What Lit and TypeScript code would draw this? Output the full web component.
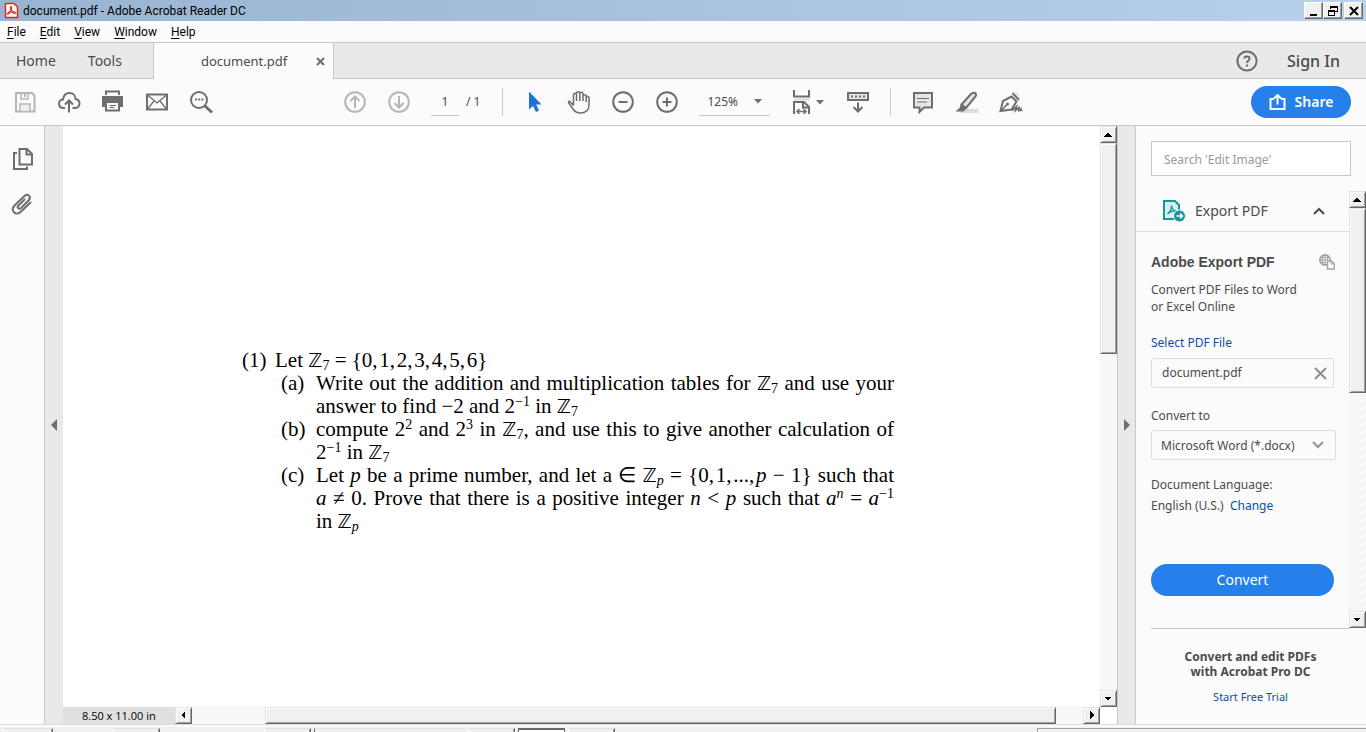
import { LitElement, html, css, svg } from "lit";
import { customElement, property } from "lit/decorators.js";
import { styleMap } from "lit/directives/style-map.js";

const icon = (body: unknown, size = 24) =>
  html`<svg class="icon" width=${size} height=${size} viewBox="0 0 ${size} ${size}" fill="none" stroke="currentColor" stroke-width="2" aria-hidden="true">${body}</svg>`;

const icons = {
  save: svg`<path d="M3 3H19L21.500 5.500V21.500H3Z"/><path d="M8 3V9H15V3" stroke-width="1.500"/><path d="M12 4V7"/><path d="M7 21V14H17V21" fill="#ececec" stroke-width="1.500"/>`,
  cloud: svg`<path d="M8 18H6.500C3.500 18 2 16 2 13.500S4 9.500 6 9.500C6.500 6 8.500 3 12.500 3S18.500 6 18.500 9C21 9.500 22.500 11 22.500 13.500S20.500 18 18 18H15.500"/><path d="M12 22.500V11M8 14.500L12 10.500L16 14.500"/>`,
  print: svg`<path d="M5 5V1.500H18V5" stroke-width="2"/><path d="M1 6H22V17H18V13H5V17H1Z" fill="currentColor" stroke="none"/><path d="M5 13V20.500H18V13"/><path d="M8.500 15.500H15M8.500 17.500H13" stroke-width="1"/>`,
  mail: svg`<path d="M2 4.500H22V19.500H2Z"/><path d="M2.500 5L12 13L21.500 5M2.500 19L9 11M21.500 19L15 11" stroke-width="1.300"/>`,
  find: svg`<circle cx="10" cy="10" r="8"/><path d="M15.500 15.500L23 22.500" stroke-width="3"/><path d="M6 9.500H8M9.200 9.500H11.200M12.400 9.500H14.400"/>`,
  up: svg`<circle cx="12" cy="12" r="9.800"/><path d="M12 18V7M7.500 11L12 6.500L16.500 11"/>`,
  down: svg`<circle cx="12" cy="12" r="9.800"/><path d="M12 6V17M7.500 13L12 17.500L16.500 13"/>`,
  pointer: svg`<path d="M6 1.500V19.500L10 16L13 22L16 20.500L13.200 14.500H18.500Z" fill="#2074d0" stroke="none"/>`,
  hand: svg`<path d="M6.500 15.500L3.500 12C2 10 1 12 1.800 13L6 19C8 22 10 23 13.500 23C18.500 23 22 20 22 15V8C22 5.500 19.200 5.500 19.200 8M6.500 15.500V5C6.500 2.500 9.500 2.500 9.500 5V11M9.500 6V3.500C9.500 1 12.800 1 12.800 3.500V11M12.800 5V4C12.800 1.500 16 1.500 16 4V11M16 6.500C16 4 19.200 4 19.200 6.500V12" stroke-width="1.500"/>`,
  minus: svg`<circle cx="12" cy="12" r="9.800"/><path d="M7.500 12H16.500"/>`,
  plus: svg`<circle cx="12" cy="12" r="9.800"/><path d="M7.500 12H16.500M12 7.500V16.500"/>`,
  fit: svg`<path d="M4 0V6.500H19V0M4 24V12H14L19 17V24M13 12V17.500H19"/><path d="M4 9.500H20" stroke="#dcdcdc"/><path d="M7 21.500H16M9.500 19L7 21.500L9.500 24M13.500 19L16 21.500L13.500 24" stroke-width="1.500"/>`,
  keyboard: svg`<path d="M2 3H22V10H2Z" fill="#e6e6e6"/><path d="M5 6.500H19.500" stroke-dasharray="2 2"/><path d="M12 12.500V21M7.500 17L12 21.500L16.500 17"/>`,
  comment: svg`<path d="M3 3H21V17.500H13L8.500 22V17.500H3Z" fill="#e6e6e6"/><path d="M6 8.500H18M6 12H16" stroke-width="1"/>`,
  marker: svg`<path d="M8 19H23V23H4Z" fill="#dcdcdc" stroke="none"/><path d="M6.500 14.500L16 4C18.500 1.500 22.500 3 20.500 6.500L11 18Z" fill="#e6e6e6"/><path d="M6 14L11.500 18.500L8.500 21.500H0.500L4.500 18Z" fill="currentColor" stroke="none"/>`,
  sign: svg`<path d="M13.500 3L20 10" stroke-width="2"/><path d="M14 2.500L18 3L21.500 8.500Z" fill="#dcdcdc" stroke="none"/><path d="M1.500 21L4 11L12.500 6.500L17.500 11.500L12.500 19.500Z"/><path d="M2 21L8 14.500" stroke-width="1.500"/><circle cx="8.500" cy="14" r="1.500" fill="currentColor" stroke="none"/><path d="M13 20.500L17.500 16.500L16.500 20.500L20 17.500V20.500L22 19V20.500H23.500" stroke-width="1.700"/>`,
  help: svg`<circle cx="12" cy="12" r="9.600"/><path d="M9.300 9.500C9.300 6.800 14.600 6.800 14.600 9.500C14.600 11.500 12 11.500 12 14M12 15.500V17.500" stroke-width="2"/>`,
  share: svg`<path d="M5 5H1.500V15H15.500V5H12" stroke-width="2"/><path d="M8.500 10.500V2M5 4.500L8.500 1L12 4.500" stroke-width="2"/>`,
  pages: svg`<path d="M9.500 2H17L22 7V17.500H9.500Z"/><path d="M16.500 2V7.500H22"/><path d="M7 6H4V22H17V19.500"/>`,
  clip: svg`<path d="M15 7L8.500 13.500C6.500 15.500 9 18 11 16L18.500 8.500C22 5 18 1 14.500 4L4.500 13.500C-0.500 18.500 6 24.500 10.500 20L21 10" stroke-width="2"/>`,
  exportPdf: svg`<path d="M2 2H13L17 6V20H2Z" fill="#d7eeec" stroke="#15959a"/><path d="M5.500 15C8 13 9.500 10 9.500 6.500C10 9.500 11.500 12 14.500 12C11 11.500 8 12.500 5.500 15Z" stroke="#15959a" stroke-width="1.300"/><circle cx="17.500" cy="17" r="6" fill="#15959a" stroke="#fbfbfb" stroke-width="1"/><path d="M14.500 17H20M18 14.500L20.500 17L18 19.500" stroke="#fff" stroke-width="1.500"/>`,
  globe: svg`<circle cx="6" cy="6" r="5"/><path d="M1 6H8M6 1V10M2.500 3.500H9.500M2 8.500H7M3.500 2V10M8.500 2V6" stroke-width="1"/><path d="M8.500 7H12.500L15.500 10V15H8.500Z" fill="#fbfbfb" stroke-width="1.500"/><path d="M12 7V10H15" stroke-width="1"/>`,
};

@customElement("classic-scrollbar")
export class ClassicScrollbar extends LitElement {
  @property() axis = "vertical";
  @property({ type: Number }) before = 0;
  @property({ type: Number }) thumb = 1;
  @property({ type: Number }) after = 1;

  static styles = css`
    :host { display: flex; box-sizing: border-box; }
    .bar { display: flex; flex: 1; background: repeating-conic-gradient(#f0f0f0 0 25%, #fff 0 50%) 0 0 / 2px 2px; }
    .bar.vertical { flex-direction: column; width: 17px; }
    .bar.horizontal { height: 17px; }
    .track { display: flex; flex: 1; min-width: 0; min-height: 0; }
    .vertical .track { flex-direction: column; }
    .arrow, .thumb {
      box-sizing: border-box; background: #f0f0f0; padding: 0;
      border: 1px solid; border-color: #e3e3e3 #696969 #696969 #e3e3e3;
      box-shadow: inset 1px 1px #fff, inset -1px -1px #a0a0a0;
    }
    .arrow { flex: none; width: 17px; height: 17px; display: grid; place-items: center; }
    .tri { display: block; fill: #000; }
  `;

  render() {
    const vertical = this.axis === "vertical";
    const arrow = (label: string, d: string) => html`
      <button class="arrow" aria-label=${label}>
        <svg class="tri" width="9" height="9" viewBox="0 0 9 9" shape-rendering="crispEdges"><path d=${d} /></svg>
      </button>`;
    return html`
      <div class="bar ${this.axis}">
        ${vertical ? arrow("Scroll up", "M0 6.500L4 2.500L8 6.500Z") : arrow("Scroll left", "M6 0L2 4L6 8Z")}
        <div class="track">
          <div style=${styleMap({ flexGrow: String(this.before) })}></div>
          <div class="thumb" style=${styleMap({ flexGrow: String(this.thumb) })}></div>
          <div style=${styleMap({ flexGrow: String(this.after) })}></div>
        </div>
        ${vertical ? arrow("Scroll down", "M0 2.500L4 6.500L8 2.500Z") : arrow("Scroll right", "M3 0L7 4L3 8Z")}
      </div>`;
  }
}

@customElement("app-root")
export class AppRoot extends LitElement {
  static styles = css`
    :host {
      display: flex; flex-direction: column; height: 100vh; overflow: hidden;
      font: 12px/16px "Noto Sans", "Open Sans", sans-serif; color: #4b4b4b; background: #fbfbfb;
    }
    * { box-sizing: border-box; }
    button, input, select { font: inherit; color: inherit; border: 0; padding: 0; margin: 0; background: none; border-radius: 0; outline: none; }
    select { appearance: none; }
    a { color: #0a51a1; text-decoration: none; }
    .icon { display: block; flex: none; }
    h1, h2, p, ol { margin: 0; padding: 0; font-size: inherit; font-weight: inherit; }

    .title { display: flex; align-items: center; height: 21px; flex: none; padding: 0 3px 0 4px; background: linear-gradient(90deg, #99b4d1, #b9d1ea); color: #000; }
    .title-text { flex: 1; padding-left: 4px; font: 12px/20px Roboto, "Open Sans", sans-serif; }
    .win { width: 19px; height: 17px; background: #f0f0f0; border: 1px solid; border-color: #fff #696969 #696969 #fff; box-shadow: inset -1px -1px #a0a0a0; display: grid; place-items: center; }
    .win.close { margin-left: 2px; }

    .menu { display: flex; gap: 14px; height: 21px; flex: none; padding: 1px 7px 0; color: #000; font: 12px/20px Roboto, "Open Sans", sans-serif; }
    .key { text-decoration: underline; text-underline-offset: 2px; }

    .tabs { display: flex; height: 37px; flex: none; border: solid #c8c8c8; border-width: 1px 0; background: #e9e9e9; font-size: 14px; }
    .nav { padding: 0 16px; }
    .nav.last { padding-right: 31px; }
    .tab { display: flex; align-items: center; justify-content: space-between; width: 181px; height: 36px; padding: 0 8px 0 47px; background: #fbfbfb; border: solid #c8c8c8; border-width: 0 1px; font-size: 13px; }
    .tab-x { display: grid; }
    .account { display: flex; align-items: center; gap: 28px; margin-left: auto; padding-right: 26px; color: #6e6e6e; }
    .sign { font-size: 16px; line-height: 20px; font-weight: 500; color: #4b4b4b; }

    .tools { display: flex; align-items: center; height: 47px; flex: none; border-bottom: 1px solid #c8c8c8; padding: 0 15px 0 3px; color: #6e6e6e; }
    .tool { display: flex; align-items: center; justify-content: center; width: 44px; height: 44px; flex: none; }
    .tool.off { color: #b6b6b6; }
    .group { display: flex; align-items: center; }
    .group.paging { margin-left: 110px; }
    .rule { width: 1px; height: 28px; background: #cbcbcb; flex: none; }
    .rule.one { margin: 0 10px 0 22px; }
    .rule.two { margin: 0 10px; }
    .page-no { width: 28px; height: 28px; margin-left: 10px; border-bottom: 1px solid #c8c8c8; text-align: center; color: #4b4b4b; }
    .pages { padding-left: 7px; color: #4b4b4b; }
    .zoom { display: flex; align-items: center; width: 71px; height: 28px; margin: 0 10px; border-bottom: 1px solid #c8c8c8; }
    .zoom-select { width: 55px; height: 26px; padding-left: 8px; color: #4b4b4b; }
    .tool.fit { width: 48px; gap: 2px; padding-left: 6px; }
    .tool.scroll { width: 52px; padding-left: 8px; }
    .share { display: flex; align-items: center; justify-content: center; gap: 9px; width: 100px; height: 32px; margin-left: auto; border-radius: 16px; background: #2680eb; color: #fff; font-size: 14px; font-weight: 600; }

    .main { display: flex; flex: 1; min-height: 0; }
    .side { display: flex; flex-direction: column; align-items: center; gap: 21px; width: 45px; flex: none; padding-top: 21px; border-right: 1px solid #c8c8c8; color: #6e6e6e; }
    .fold { display: grid; place-items: center; width: 18px; flex: none; background: #e9e9e9; }
    .fold.right { border: solid #c8c8c8; border-width: 0 1px; width: 19px; }
    .view { display: grid; grid-template: minmax(0, 1fr) 17px / minmax(0, 1fr) 17px; flex: 1; min-width: 0; background: #fff; }
    .paper { padding: 223px 0 0 179px; overflow: hidden; color: #000; font: 21px/23px "Liberation Serif", serif; white-space: nowrap; }
    .foot { display: flex; min-width: 0; }
    .size { width: 112px; flex: none; padding-left: 19px; background: #e0e0e0; color: #000; font: 11px/17px "Open Sans", sans-serif; }
    .grow { flex: 1; }

    .question { display: grid; grid-template-columns: 33px max-content; }
    .parts { display: grid; grid-template-columns: 35px 578px; padding-left: 39px; }
    .line { display: block; }
    .full { text-align-last: justify; }
    sub, sup { font-size: 14px; line-height: 0; }
    sub { vertical-align: -3px; }
    sup { vertical-align: 7px; }
    .z { font-family: "DejaVu Sans", sans-serif; font-size: 19px; line-height: 0; }

    .panel { display: flex; flex-direction: column; width: 230px; flex: none; }
    .search { width: 200px; height: 35px; margin: 15px 0 15px 15px; padding: 2px 12px 0; border: 1px solid #c8c8c8; background: #fff; font-size: 12px; }
    .search::placeholder { color: #9a9a9a; opacity: 1; }
    .scroller { display: flex; height: 437px; flex: none; }
    .body { flex: 1; min-width: 0; }
    .head { display: flex; align-items: center; width: 100%; height: 41px; padding: 0 24px 0 26px; border-bottom: 1px solid #dcdcdc; font-size: 14px; }
    .head-text { flex: 1; padding-left: 9px; text-align: left; }
    .content { display: flex; flex-direction: column; padding: 21px 14px 0 15px; }
    .name { display: flex; justify-content: space-between; align-items: center; font: bold 14px/18px "Liberation Sans", sans-serif; color: #4b4b4b; }
    .name .icon { color: #a5a5a5; }
    .desc { margin-top: 10px; line-height: 17px; }
    .pick { margin-top: 20px; }
    .file { display: flex; align-items: center; justify-content: space-between; width: 183px; height: 30px; margin-top: 7px; padding: 0 6px 0 10px; border: 1px solid #dcdcdc; border-radius: 3px; }
    .label { margin-top: 20px; }
    .format { display: grid; width: 185px; height: 30px; margin-top: 6px; border: 1px solid #dcdcdc; border-radius: 3px; align-items: center; }
    .format-select { grid-area: 1 / 1; height: 28px; padding: 2px 0 0 9px; }
    .format .icon { grid-area: 1 / 1; justify-self: end; margin-right: 11px; color: #959595; pointer-events: none; }
    .lang { margin-top: 14px; line-height: 21px; }
    .convert { width: 183px; height: 32px; margin-top: 48px; border-radius: 16px; background: #2680eb; color: #fff; font-size: 14px; }
    .promo { margin-left: 15px; width: 199px; padding-top: 20px; border-top: 1px solid #c8c8c8; text-align: center; }
    .promo-title { font-weight: 700; font-size: 12px; line-height: 15px; }
    .trial { display: block; margin-top: 10px; font-size: 11px; }

    .taskbar { display: flex; gap: 3px; height: 8px; flex: none; padding: 3px 0 0 3px; border-top: 1px solid #dcdcdc; background: #f0f0f0; overflow: hidden; box-shadow: inset 0 2px #f8fbff; }
    .task { width: 47px; flex: none; border: solid; border-width: 1px 1px 0 1px; border-color: #e3e3e3 #696969 #696969 #fff; box-shadow: inset -1px 0 #a0a0a0; }
    .task.first { width: 50px; }
    .task.plain { border-color: transparent; box-shadow: none; width: 54px; }
    .task.wide { width: 98px; border-color: transparent; box-shadow: none; }
    .task.quick { width: 151px; border-color: #e3e3e3 transparent transparent #696969; box-shadow: none; }
    .task.on { border-color: #696969; border-top-width: 2px; background: #fff; box-shadow: none; }
    .tray { width: 329px; flex: none; margin-left: auto; border: solid #a0a0a0; border-width: 1px 0 0 1px; }
  `;

  private tool(label: string, body: unknown, extra = "") {
    return html`<button class="tool ${extra}" aria-label=${label}>${icon(body)}</button>`;
  }

  private caret() {
    return html`<svg class="icon" width="8" height="5" viewBox="0 0 8 5" aria-hidden="true"><path d="M0 0H8L4 4.500Z" fill="#6e6e6e" /></svg>`;
  }

  render() {
    const z = html`<span class="z">ℤ</span>`;
    const menus = ["File", "Edit", "View", "Window", "Help"];
    const tasks = ["first", "plain", "", "wide", "", "quick", "", "on", ""];
    return html`
      <header class="title">
        <svg class="icon" width="15" height="17" viewBox="0 0 15 17" aria-hidden="true">
          <path d="M1.500 1.500H10L13.500 5V15.500H1.500Z" fill="#fff" stroke="#e2231a" stroke-width="1.500" stroke-linejoin="round" />
          <path d="M3.500 12C3.500 10.500 6 10 7 8C8 6 7.500 4.500 7 4.500S6 6 7.200 8C8.500 10 11.500 9.500 11.500 10.800S8.500 10.500 7 10S3.800 13.500 3.500 12Z" fill="none" stroke="#e2231a" stroke-width="1.200" />
        </svg>
        <h1 class="title-text">document.pdf - Adobe Acrobat Reader DC</h1>
        <button class="win" aria-label="Minimize"><svg class="icon" width="12" height="10" viewBox="0 0 12 10"><path d="M2 8H9V10H2Z" /></svg></button>
        <button class="win" aria-label="Restore"><svg class="icon" width="12" height="10" viewBox="0 0 12 10" fill="none" stroke="#000" shape-rendering="crispEdges"><path d="M3.500 3V0.500H10.500V5.500H8M3 1.500H11M1.500 4.500H7.500V9.500H1.500ZM1 5.500H8" /></svg></button>
        <button class="win close" aria-label="Close"><svg class="icon" width="12" height="10" viewBox="0 0 12 10" stroke="#000" stroke-width="2"><path d="M2 1L10 9M10 1L2 9" /></svg></button>
      </header>

      <nav class="menu">
        ${menus.map((m) => html`<button><span class="key">${m[0]}</span>${m.slice(1)}</button>`)}
      </nav>

      <div class="tabs">
        <button class="nav">Home</button>
        <button class="nav last">Tools</button>
        <div class="tab">
          document.pdf
          <button class="tab-x" aria-label="Close tab"><svg class="icon" width="9" height="9" viewBox="0 0 9 9" stroke="#6e6e6e" stroke-width="2"><path d="M1 1L8 8M8 1L1 8" /></svg></button>
        </div>
        <div class="account">
          <button aria-label="Help">${icon(icons.help)}</button>
          <button class="sign">Sign In</button>
        </div>
      </div>

      <div class="tools">
        ${this.tool("Save", icons.save, "off")} ${this.tool("Upload", icons.cloud)} ${this.tool("Print", icons.print)}
        ${this.tool("Email", icons.mail)} ${this.tool("Find", icons.find)}
        <div class="group paging">
          ${this.tool("Previous page", icons.up, "off")} ${this.tool("Next page", icons.down, "off")}
          <input class="page-no" aria-label="Page number" value="1" />
          <span class="pages">/ 1</span>
        </div>
        <div class="rule one"></div>
        <div class="group">
          ${this.tool("Select", icons.pointer)} ${this.tool("Pan", icons.hand)}
          ${this.tool("Zoom out", icons.minus)} ${this.tool("Zoom in", icons.plus)}
          <label class="zoom">
            <select class="zoom-select" aria-label="Zoom"><option>125%</option></select>
            ${this.caret()}
          </label>
          <button class="tool fit" aria-label="Fit width">${icon(icons.fit)}${this.caret()}</button>
          ${this.tool("Scrolling mode", icons.keyboard, "scroll")}
        </div>
        <div class="rule two"></div>
        <div class="group">
          ${this.tool("Comment", icons.comment)} ${this.tool("Highlight", icons.marker)} ${this.tool("Sign", icons.sign)}
        </div>
        <button class="share">${icon(icons.share, 17)}Share</button>
      </div>

      <div class="main">
        <nav class="side">
          <button aria-label="Page thumbnails">${icon(icons.pages)}</button>
          <button aria-label="Attachments">${icon(icons.clip)}</button>
        </nav>
        <button class="fold" aria-label="Collapse left pane"><svg class="icon" width="6" height="12" viewBox="0 0 6 12"><path d="M6 0V12L0 6Z" fill="#6e6e6e" /></svg></button>

        <main class="view">
          <article class="paper">
            <div class="question">
              <span>(1)</span>
              <span>Let ${z}<sub>7</sub> = {0,&hairsp;1,&hairsp;2,&hairsp;3,&hairsp;4,&hairsp;5,&hairsp;6}</span>
            </div>
            <div class="parts">
              <span>(a)</span>
              <p>
                <span class="line full">Write out the addition and multiplication tables for ${z}<sub>7</sub> and use your</span>
                <span class="line">answer to find −2 and 2<sup>−1</sup> in ${z}<sub>7</sub></span>
              </p>
              <span>(b)</span>
              <p>
                <span class="line full">compute 2<sup>2</sup> and 2<sup>3</sup> in ${z}<sub>7</sub>, and use this to give another calculation of</span>
                <span class="line">2<sup>−1</sup> in ${z}<sub>7</sub></span>
              </p>
              <span>(c)</span>
              <p>
                <span class="line full">Let <i>p</i> be a prime number, and let a ∈ ${z}<sub><i>p</i></sub> = {0,&hairsp;1,&hairsp;...,&hairsp;<i>p</i> − 1} such that</span>
                <span class="line full"><i>a</i> ≠ 0. Prove that there is a positive integer <i>n</i> &lt; <i>p</i> such that <i>a</i><sup><i>n</i></sup> = <i>a</i><sup>−1</sup></span>
                <span class="line">in ${z}<sub><i>p</i></sub></span>
              </p>
            </div>
          </article>
          <classic-scrollbar axis="vertical" .before=${0} .thumb=${210} .after=${338}></classic-scrollbar>
          <div class="foot">
            <span class="size">8.50 x 11.00 in</span>
            <classic-scrollbar class="grow" axis="horizontal" .before=${73} .thumb=${791} .after=${27}></classic-scrollbar>
          </div>
        </main>

        <button class="fold right" aria-label="Collapse right pane"><svg class="icon" width="6" height="12" viewBox="0 0 6 12"><path d="M0 0V12L6 6Z" fill="#6e6e6e" /></svg></button>

        <aside class="panel">
          <input class="search" type="search" aria-label="Search tools" placeholder="Search 'Edit Image'" />
          <div class="scroller">
            <div class="body">
              <button class="head">
                ${icon(icons.exportPdf)}
                <span class="head-text">Export PDF</span>
                <svg class="icon" width="12" height="8" viewBox="0 0 12 8" fill="none" stroke="#4b4b4b" stroke-width="2"><path d="M1 7L6 2L11 7" /></svg>
              </button>
              <div class="content">
                <h2 class="name">Adobe Export PDF ${icon(icons.globe, 16)}</h2>
                <p class="desc">Convert PDF Files to Word<br />or Excel Online</p>
                <a class="pick" href="#">Select PDF File</a>
                <div class="file">
                  document.pdf
                  <button aria-label="Remove file"><svg class="icon" width="13" height="13" viewBox="0 0 13 13" stroke="#8e8e8e" stroke-width="2"><path d="M1 1L12 12M12 1L1 12" /></svg></button>
                </div>
                <label class="label" for="format">Convert to</label>
                <div class="format">
                  <select class="format-select" id="format"><option>Microsoft Word (*.docx)</option></select>
                  <svg class="icon" width="12" height="8" viewBox="0 0 12 8" fill="none" stroke="currentColor" stroke-width="2"><path d="M1 1L6 6L11 1" /></svg>
                </div>
                <p class="lang">Document Language:<br />English (U.S.)&nbsp; <a href="#">Change</a></p>
                <button class="convert">Convert</button>
              </div>
            </div>
            <classic-scrollbar axis="vertical" .before=${0} .thumb=${184} .after=${219}></classic-scrollbar>
          </div>
          <div class="promo">
            <p class="promo-title">Convert and edit PDFs<br />with Acrobat Pro DC</p>
            <a class="trial" href="#">Start Free Trial</a>
          </div>
        </aside>
      </div>

      <footer class="taskbar">
        ${tasks.map((t) => html`<div class="task ${t}"></div>`)}
        <div class="tray"></div>
      </footer>
    `;
  }
}
